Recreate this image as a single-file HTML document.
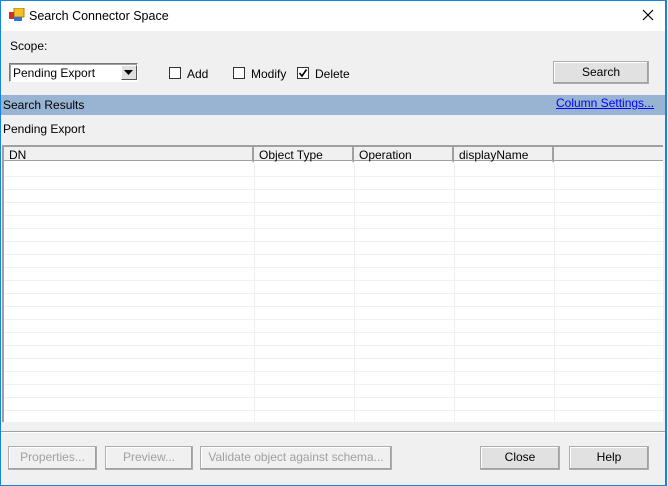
<!DOCTYPE html>
<html><head><style>
*{margin:0;padding:0;box-sizing:border-box}
body{width:668px;height:486px;overflow:hidden;background:#fff;font-family:"Liberation Sans",sans-serif;font-size:12px;color:#000;position:relative}
.win{position:absolute;left:0;top:0;width:668px;height:486px;background:#f0f0f0}
.frame{position:absolute;left:0;top:0;width:667px;height:486px;border:1px solid #1883d7;border-right-width:2px;pointer-events:none}
.title{position:absolute;left:0;top:0;width:100%;height:31px;background:#fff}
.a{position:absolute;white-space:nowrap}
.btn{position:absolute;background:#e1e1e1;border:1px solid #adadad;box-shadow:inset -1px -1px 0 #a0a0a0,inset 1px 1px 0 #fff;text-align:center;line-height:21px}
.dis{color:#a0a0a0}
.cb{position:absolute;width:12px;height:12px;border:1px solid #333;background:#fff}
.tbl{position:absolute;left:2px;top:145px;width:661px;height:277px;background:#fff;border-top:2px solid #a0a0a0;border-left:2px solid #a0a0a0;overflow:hidden}
.hd{position:absolute;top:0;height:16px;background:#f0f0f0;border-right:2px solid #a0a0a0;border-bottom:2px solid #fff;padding-left:5px;line-height:16px;box-shadow:inset 0 -1px 0 #a0a0a0}
</style></head><body>
<div class="win">
<div class="title">
<svg class="a" style="left:9px;top:8px" width="16" height="14"><rect x="5" y="0" width="10" height="9" fill="#f2c029" stroke="#b08000"/><rect x="0" y="4" width="5" height="7" fill="#d03020"/><rect x="5" y="9" width="8" height="4" fill="#3a70d0"/></svg>
<div class="a" style="left:29px;top:9px;font-size:12.5px">Search Connector Space</div>
<svg class="a" style="left:642px;top:9px" width="12" height="12"><path d="M1 1L11 11M11 1L1 11" stroke="#000" stroke-width="1.2"/></svg>
</div>
<div class="a" style="left:10px;top:39px">Scope:</div>
<div class="a" style="left:9px;top:63px;width:129px;height:19px;background:#fff;border:1px solid #7a7a7a;border-right-color:#fff;border-bottom-color:#fff;box-shadow:inset 1px 1px 0 #a0a0a0">
<div class="a" style="left:3px;top:2px">Pending Export</div>
<div class="a" style="left:111px;top:1px;width:16px;height:15px;background:#e1e1e1;border:1px solid #fff;border-right-color:#555;border-bottom-color:#555"></div>
<svg class="a" style="left:114px;top:6px" width="10" height="6"><path d="M0 0H9L4.5 5Z" fill="#000"/></svg>
</div>
<div class="cb" style="left:169px;top:67px"></div><div class="a" style="left:187px;top:67px">Add</div>
<div class="cb" style="left:233px;top:67px"></div><div class="a" style="left:251px;top:67px">Modify</div>
<div class="cb" style="left:297px;top:67px"></div>
<svg class="a" style="left:298px;top:68px" width="10" height="10"><path d="M1.5 5L4 8L8.5 1.5" stroke="#000" stroke-width="1.6" fill="none"/></svg>
<div class="a" style="left:315px;top:67px">Delete</div>
<div class="btn" style="left:553px;top:61px;width:96px;height:23px">Search</div>
<div class="a" style="left:1px;top:95px;width:664px;height:20px;background:#98b4d2"></div>
<div class="a" style="left:3px;top:98px">Search Results</div>
<div class="a" style="left:556px;top:96px;color:#0000ff;text-decoration:underline">Column Settings...</div>
<div class="a" style="left:3px;top:122px">Pending Export</div>
<div class="tbl">
<div class="hd" style="left:0;width:250px">DN</div>
<div class="hd" style="left:250px;width:100px">Object Type</div>
<div class="hd" style="left:350px;width:100px">Operation</div>
<div class="hd" style="left:450px;width:100px">displayName</div>
<div class="hd" style="left:550px;width:120px;border-right:0"></div>
<div class="a" style="left:0;top:17px;width:660px;height:258px;background:repeating-linear-gradient(#fff 0,#fff 12px,#f0f0f0 12px,#f0f0f0 13px)"></div>
<div class="a" style="left:250px;top:17px;width:1px;height:258px;background:#f0f0f0"></div>
<div class="a" style="left:350px;top:17px;width:1px;height:258px;background:#f0f0f0"></div>
<div class="a" style="left:450px;top:17px;width:1px;height:258px;background:#f0f0f0"></div>
<div class="a" style="left:550px;top:17px;width:1px;height:258px;background:#f0f0f0"></div>
</div>
<div class="a" style="left:1px;top:431px;width:664px;height:1px;background:#a0a0a0"></div>
<div class="a" style="left:1px;top:432px;width:664px;height:1px;background:#fff"></div>
<div class="btn dis" style="left:8px;top:446px;width:89px;height:24px;background:#f0f0f0">Properties...</div>
<div class="btn dis" style="left:105px;top:446px;width:88px;height:24px;background:#f0f0f0">Preview...</div>
<div class="btn dis" style="left:200px;top:446px;width:192px;height:24px;background:#f0f0f0">Validate object against schema...</div>
<div class="btn" style="left:480px;top:446px;width:80px;height:24px">Close</div>
<div class="btn" style="left:569px;top:446px;width:80px;height:24px">Help</div>
</div>
<div class="frame"></div>
</body></html>
